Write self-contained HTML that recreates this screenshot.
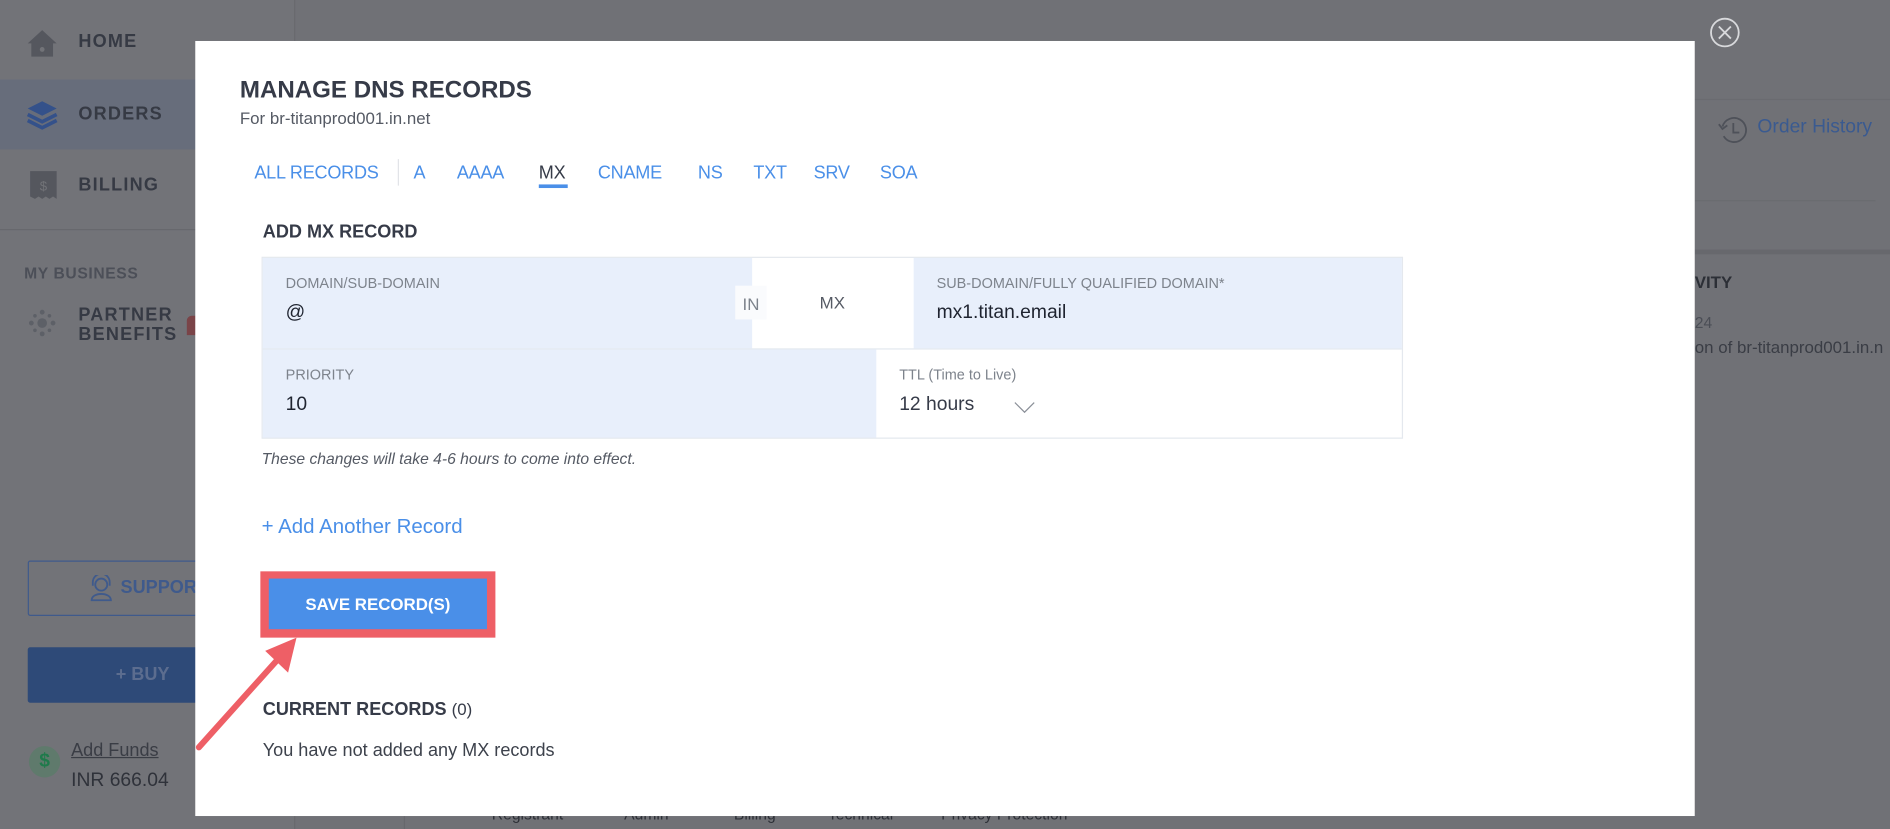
<!DOCTYPE html>
<html><head><meta charset="utf-8"><style>
*{margin:0;padding:0;box-sizing:border-box}
html,body{width:1890px;height:829px;overflow:hidden;background:#707176;font-family:"Liberation Sans",sans-serif}
#w{position:absolute;left:0;top:0;width:1568px;height:688px;transform:scale(1.20536);transform-origin:0 0;background:#707176}
.a{position:absolute}
.nav{color:#363a44;font-size:15px;letter-spacing:1px;font-weight:bold}
.tab{position:absolute;top:135px;font-size:15px;color:#4a8fe8;letter-spacing:-0.2px}
.lbl{position:absolute;font-size:12px;color:#7d838c}
.val{position:absolute;font-size:16px;color:#1f2430}
</style></head><body><div id="w">
<div class="a" style="left:0;top:0;width:245px;height:688px;background:#727378;border-right:1px solid #68696e"></div>
<div class="a" style="left:0;top:66px;width:245px;height:58px;background:#676d7b"></div>
<div class="a" style="left:0;top:190px;width:245px;height:1px;background:#67686d"></div>
<svg class="a" style="left:22px;top:24px" width="26" height="24"><path d="M13 1 L25 12 H22 V23 H4 V12 H1Z" fill="#55575e"/><circle cx="13" cy="17" r="2" fill="#727378"/></svg>
<div class="a nav" style="left:65px;top:26px">HOME</div>
<svg class="a" style="left:22px;top:82px" width="26" height="26"><path d="M13 2 L25 8 L13 14 L1 8Z" fill="#34518a"/><path d="M1 13 L13 19 L25 13" stroke="#34518a" stroke-width="3" fill="none"/><path d="M1 18 L13 24 L25 18" stroke="#34518a" stroke-width="3" fill="none"/></svg>
<div class="a nav" style="left:65px;top:86px">ORDERS</div>
<svg class="a" style="left:24px;top:141px" width="24" height="26"><path d="M1 1 H23 V24 L20 22 L17 24 L14 22 L11 24 L8 22 L5 24 L1 22Z" fill="#55575e"/><text x="9" y="17" font-size="11" fill="#727378" font-family="Liberation Sans">$</text></svg>
<div class="a nav" style="left:65px;top:145px">BILLING</div>
<div class="a" style="left:20px;top:219px;font-size:13px;font-weight:bold;color:#4c4f58;letter-spacing:.5px">MY BUSINESS</div>
<svg class="a" style="left:23px;top:256px" width="24" height="24" fill="#5d6067"><circle cx="12" cy="12" r="4"/><circle cx="12" cy="3" r="2"/><circle cx="12" cy="21" r="2"/><circle cx="3" cy="12" r="2"/><circle cx="21" cy="12" r="2"/><circle cx="6" cy="6" r="1.5"/><circle cx="18" cy="6" r="1.5"/><circle cx="6" cy="18" r="1.5"/><circle cx="18" cy="18" r="1.5"/></svg>
<div class="a nav" style="left:65px;top:254px;line-height:16px">PARTNER<br>BENEFITS</div>
<div class="a" style="left:155px;top:262px;width:10px;height:16px;background:#7a4448;border-radius:4px 0 0 0"></div>
<div class="a" style="left:23px;top:465px;width:160px;height:46px;border:1px solid #3f5a8c;border-radius:2px"></div>
<svg class="a" style="left:73px;top:477px" width="22" height="22" fill="none" stroke="#3f5a8c" stroke-width="1.5"><circle cx="11" cy="8" r="5"/><path d="M3 21 C3 14 19 14 19 21Z"/><path d="M4 9 V6 A7 7 0 0 1 18 6 V9"/></svg>
<div class="a" style="left:100px;top:479px;font-size:15px;font-weight:bold;color:#3f5a8c">SUPPORT</div>
<div class="a" style="left:23px;top:537px;width:160px;height:46px;background:#2e4a78;border-radius:2px"></div>
<div class="a" style="left:96px;top:551px;font-size:15px;font-weight:bold;color:#5c6d8f">+ BUY</div>
<div class="a" style="left:24px;top:619px;width:26px;height:26px;border-radius:50%;background:#5f7a6c;color:#1f7a4b;font-size:16px;font-weight:bold;text-align:center;line-height:26px">$</div>
<div class="a" style="left:59px;top:614px;font-size:15px;color:#3a3d45;text-decoration:underline">Add Funds</div>
<div class="a" style="left:59px;top:639px;font-size:16px;color:#2f323a">INR 666.04</div>
<div class="a" style="left:1406px;top:82px;width:162px;height:1px;background:#6a6b70"></div>
<div class="a" style="left:1406px;top:166px;width:150px;height:1px;background:#6a6b70"></div>
<div class="a" style="left:1406px;top:207px;width:162px;height:4px;background:#67686d"></div>
<svg class="a" style="left:1424px;top:93px" width="30" height="30" fill="none" stroke="#4e5159" stroke-width="1.5"><path d="M5 12 A10 10 0 1 1 6 20"/><path d="M2 10 L5 14 L9 11"/><path d="M14 9 V17 H19"/></svg>
<div class="a" style="left:1458px;top:97px;font-size:16px;color:#3a5a90">Order History</div>
<div class="a" style="left:1406px;top:226px;font-size:14px;font-weight:bold;color:#2c2f36">VITY</div>
<div class="a" style="left:1406px;top:260px;font-size:13px;color:#4b4e56">24</div>
<div class="a" style="left:1406px;top:280px;font-size:14px;color:#3a3d45;white-space:nowrap">on of br-titanprod001.in.n</div>
<div class="a" style="left:335px;top:660px;width:1px;height:28px;background:#67686d"></div>
<div class="a" style="left:408px;top:668px;font-size:13px;color:#2c2f36;white-space:nowrap">Registrant&nbsp;&nbsp;&nbsp;&nbsp;&nbsp;&nbsp;&nbsp;&nbsp;&nbsp;&nbsp;&nbsp;&nbsp;&nbsp;&nbsp;Admin&nbsp;&nbsp;&nbsp;&nbsp;&nbsp;&nbsp;&nbsp;&nbsp;&nbsp;&nbsp;&nbsp;&nbsp;&nbsp;&nbsp;&nbsp;Billing&nbsp;&nbsp;&nbsp;&nbsp;&nbsp;&nbsp;&nbsp;&nbsp;&nbsp;&nbsp;&nbsp;&nbsp;Technical&nbsp;&nbsp;&nbsp;&nbsp;&nbsp;&nbsp;&nbsp;&nbsp;&nbsp;&nbsp;&nbsp;Privacy Protection</div>
<svg class="a" style="left:1418px;top:14px" width="26" height="26" fill="none" stroke="#d8d9dc" stroke-width="1.5"><circle cx="13" cy="13" r="11.5"/><path d="M8 8 L18 18 M18 8 L8 18"/></svg>
<div class="a" style="left:162px;top:34px;width:1244px;height:643px;background:#fff"></div>
<div class="a" style="left:199px;top:64px;font-size:20px;font-weight:bold;color:#363b48">MANAGE DNS RECORDS</div>
<div class="a" style="left:199px;top:90px;font-size:14px;color:#555a64">For br-titanprod001.in.net</div>
<div class="tab" style="left:211px">ALL RECORDS</div>
<div class="a" style="left:330px;top:132px;width:1px;height:22px;background:#e2e4e8"></div>
<div class="tab" style="left:343px">A</div>
<div class="tab" style="left:379px">AAAA</div>
<div class="tab" style="left:447px;color:#363b48">MX</div>
<div class="a" style="left:447px;top:153px;width:24px;height:3px;background:#4a8fe8"></div>
<div class="tab" style="left:496px">CNAME</div>
<div class="tab" style="left:579px">NS</div>
<div class="tab" style="left:625px">TXT</div>
<div class="tab" style="left:675px">SRV</div>
<div class="tab" style="left:730px">SOA</div>
<div class="a" style="left:218px;top:184px;font-size:15px;font-weight:bold;color:#363b48">ADD MX RECORD</div>
<div class="a" style="left:217px;top:213px;width:947px;height:151px;border:1px solid #e4e8ee;background:#fff"></div>
<div class="a" style="left:218px;top:214px;width:406px;height:75px;background:#e8effb"></div>
<div class="a" style="left:758px;top:214px;width:405px;height:75px;background:#e8effb"></div>
<div class="a" style="left:610px;top:237px;width:26px;height:28px;background:#fafbfd"></div>
<div class="a" style="left:218px;top:289px;width:945px;height:1px;background:#e2e7ef"></div>
<div class="a" style="left:218px;top:290px;width:509px;height:73px;background:#e8effb"></div>
<div class="lbl" style="left:237px;top:228px">DOMAIN/SUB-DOMAIN</div>
<div class="val" style="left:237px;top:251px">@</div>
<div class="a" style="left:616px;top:244px;font-size:14px;color:#7d838c">IN</div>
<div class="a" style="left:680px;top:243px;font-size:14px;color:#555a64">MX</div>
<div class="lbl" style="left:777px;top:228px">SUB-DOMAIN/FULLY QUALIFIED DOMAIN*</div>
<div class="val" style="left:777px;top:251px">mx1.titan.email</div>
<div class="lbl" style="left:237px;top:304px">PRIORITY</div>
<div class="val" style="left:237px;top:327px">10</div>
<div class="lbl" style="left:746px;top:304px">TTL (Time to Live)</div>
<div class="val" style="left:746px;top:327px;color:#363b48">12 hours</div>
<svg class="a" style="left:841px;top:332px" width="18" height="12" fill="none" stroke="#8a8f98" stroke-width="1"><path d="M1 2 L9 10 L17 2"/></svg>
<div class="a" style="left:217px;top:373px;font-size:13px;font-style:italic;color:#555a64">These changes will take 4-6 hours to come into effect.</div>
<div class="a" style="left:217px;top:427px;font-size:17px;color:#4a8fe8">+ Add Another Record</div>
<div class="a" style="left:216px;top:474px;width:195px;height:55px;background:#ee5f66"></div>
<div class="a" style="left:223px;top:480px;width:181px;height:42px;background:#4a8fe8;color:#fff;font-size:14px;font-weight:bold;text-align:center;line-height:42px">SAVE RECORD(S)</div>
<svg class="a" style="left:160px;top:520px" width="100" height="105"><path d="M5 100 L75 22" stroke="#ee5f66" stroke-width="5" stroke-linecap="round"/><path d="M86 9 L60 20 L79 38Z" fill="#ee5f66"/></svg>
<div class="a" style="left:218px;top:580px;font-size:15px;font-weight:bold;color:#363b48">CURRENT RECORDS <span style="font-weight:normal;font-size:14px">(0)</span></div>
<div class="a" style="left:218px;top:614px;font-size:15px;color:#3d424c">You have not added any MX records</div>
</div></body></html>
